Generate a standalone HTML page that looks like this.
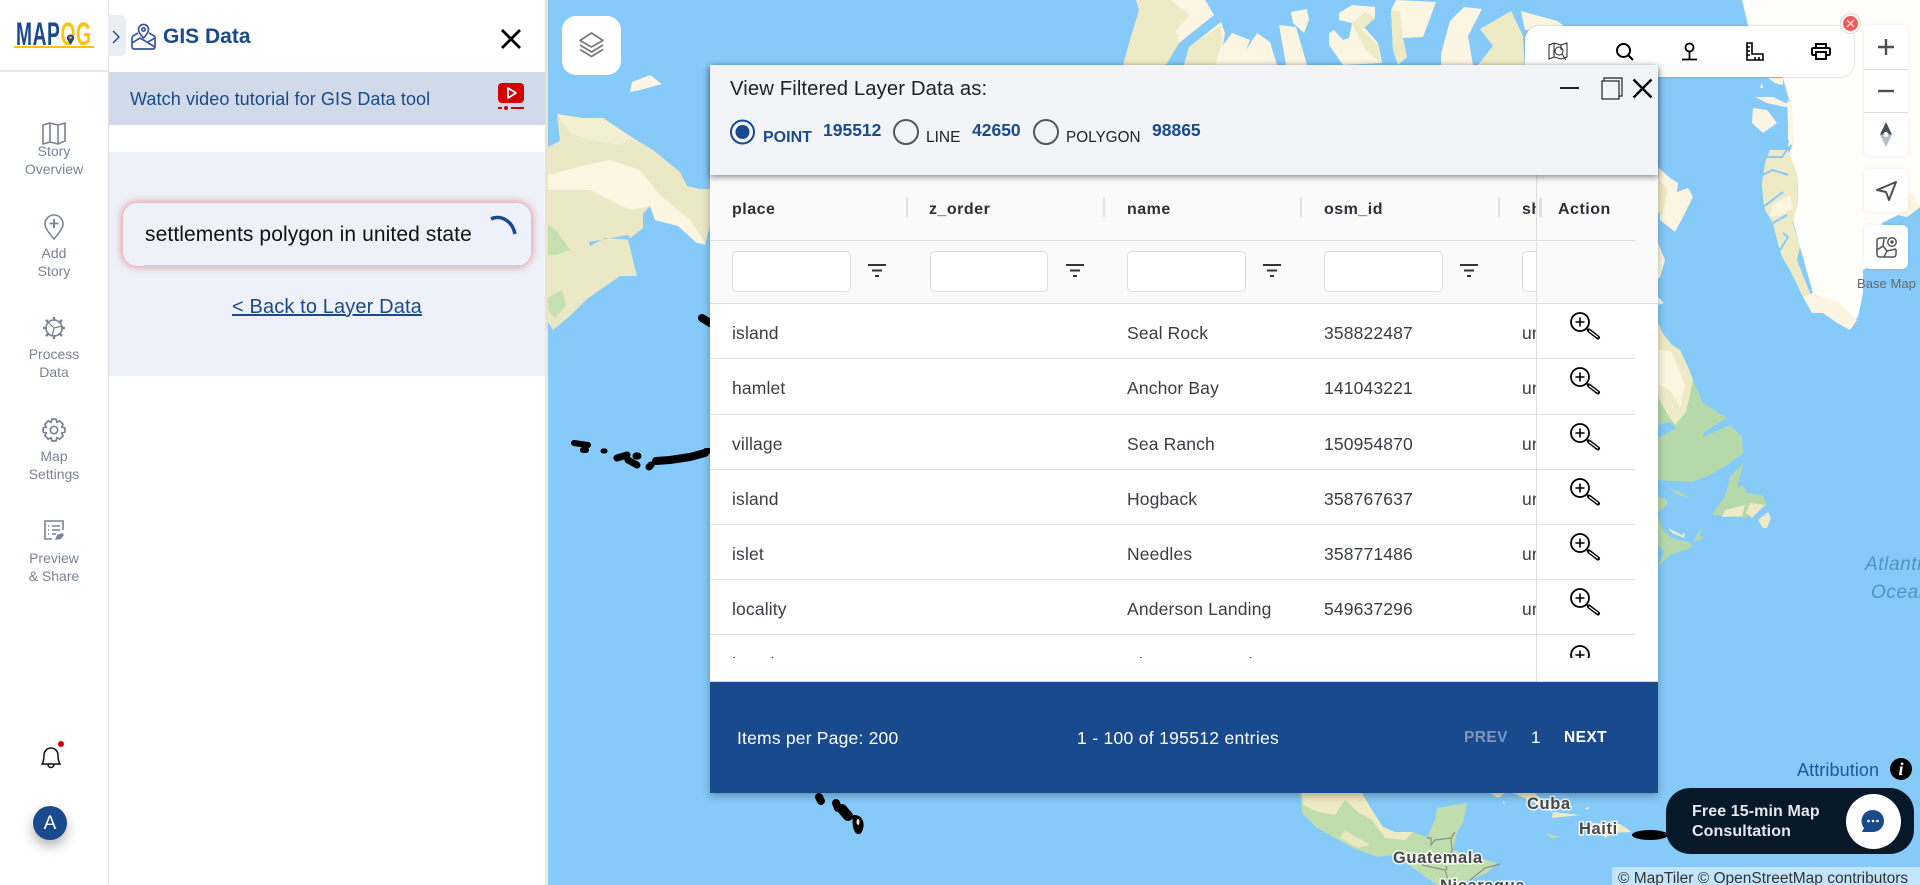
<!DOCTYPE html>
<html lang="en"><head><meta charset="utf-8"><title>GIS Data</title>
<style>
html,body{margin:0;padding:0;width:1920px;height:885px;overflow:hidden;background:#85caf9;font-family:"Liberation Sans",sans-serif}
.a{position:absolute;white-space:nowrap}
svg{display:block}
.nav{position:absolute;left:0;width:108px;text-align:center;color:#7a8296;font-size:14px;line-height:18px}
.th{position:absolute;top:200px;height:20px;line-height:20px;font-size:16px;font-weight:bold;color:#2b2f36;letter-spacing:.5px;white-space:nowrap}
.sep{position:absolute;top:198px;width:2px;height:19px;background:#e0e0e0}
.inp{position:absolute;top:251px;height:41px;background:#fff;border:1px solid #dcdcdc;border-radius:5px;box-sizing:border-box}
.td{position:absolute;font-size:17.5px;color:#3a3d42;letter-spacing:.15px;white-space:nowrap;line-height:20px}
.ln{position:absolute;left:0;width:925px;height:1px;background:#e2e2e2}
</style></head><body>

<!-- MAP -->
<svg class="a" style="left:0;top:0" width="1920" height="885" viewBox="0 0 1920 885">
<rect width="1920" height="885" fill="#85caf9"/>
<!-- Greenland -->
<path d="M1742 0L1920 0L1920 207L1907 217L1898 215L1882 223L1880 260L1863 270L1863 293L1858 317L1850 323L1837 307L1823 310L1813 293L1800 247L1793 220L1798 203L1797 173L1788 157L1793 143L1790 103L1783 78L1748 25Z" fill="#fffefb"/>
<path d="M1920 207L1912 192L1903 197L1898 215L1907 217Z" fill="#fbf5e1"/>
<path d="M1755 97L1773 97L1790 105L1785 107L1767 103ZM1753 108L1767 110L1777 123L1763 133L1752 123ZM1762 82L1763 88L1760 88ZM1768 78L1783 78L1783 85L1775 83ZM1787 100L1792 105L1794 143L1788 147L1788 125Z" fill="#fbf5e1"/>
<path d="M1770 150L1788 150L1797 173L1797 190L1798 203L1793 223L1800 247L1797 260L1810 293L1813 307L1803 297L1790 270L1782 257L1777 240L1773 223L1765 210L1763 200L1762 183L1765 163L1767 157Z" fill="#efeac6"/>
<path d="M1772 205L1790 195L1793 208L1780 216L1770 216Z" fill="#fbf5e1"/>
<path d="M1813 293L1840 303L1857 320L1850 330L1837 323L1823 313L1812 313L1803 297Z" fill="#fbf5e1"/>
<g fill="none" stroke="#85caf9" stroke-width="2"><path d="M1767 157L1782 157L1787 150M1762 175L1773 170L1788 175M1763 207L1783 192M1773 223L1787 215M1783 233L1788 237L1780 250M1785 120L1783 130M1788 140L1787 147"/></g>
<!-- top arctic islands -->
<path d="M1136 0L1205 0L1214 15L1195 30L1179 43L1166 65L1123 65L1132 33L1139 10Z" fill="#efeac6"/>
<path d="M1170 0L1205 0L1214 15L1195 30L1179 43L1176 30L1190 15Z" fill="#fbf5e1"/>
<path d="M1221 22L1225 33L1223 45L1232 33L1250 40L1246 50L1257 33L1270 42L1277 65L1184 65L1189 47Z" fill="#fbf5e1"/>
<path d="M1221 25L1222 42L1215 65L1184 65L1189 47Z" fill="#efeac6"/>
<path d="M1279 25L1296 27L1307 65L1286 65ZM1291 12L1307 9L1309 20L1304 33L1293 23Z" fill="#fbf5e1"/>
<path d="M1329 33L1334 30L1343 40L1349 38L1352 23L1339 20L1339 13L1352 5L1375 7L1375 18L1364 27L1378 43L1382 63L1343 65L1329 45Z" fill="#fbf5e1"/>
<path d="M1352 23L1365 12L1375 18L1362 30L1378 45L1380 62L1366 50Z" fill="#efeac6"/>
<path d="M1391 10L1396 0L1436 2L1423 37L1403 38L1407 57L1398 65L1393 50Z" fill="#fbf5e1"/>
<path d="M1391 10L1400 12L1403 38L1407 57L1398 65L1393 50Z" fill="#efeac6"/>
<path d="M1464 7L1482 9L1468 36L1473 65L1441 65L1441 54L1450 21Z" fill="#fbf5e1"/>
<path d="M1480 29L1511 11L1523 36L1525 65L1478 65L1493 46Z" fill="#efeac6"/>
<path d="M1521 11L1557 21L1570 30L1525 30Z" fill="#fbf5e1"/>
<!-- right of modal -->
<path d="M1658 167L1670 178L1678 183L1677 192L1688 188L1693 197L1683 217L1675 232L1660 220Z" fill="#fbf5e1"/>
<path d="M1658 178L1668 190L1662 215L1658 212Z" fill="#efeac6"/>
<path d="M1658 243L1665 260L1660 278L1658 278ZM1658 297L1664 303L1658 305Z" fill="#fbf5e1"/>
<!-- Labrador / Quebec -->
<path d="M1658 323L1664 335L1672 345L1680 350L1688 367L1693 380L1703 403L1727 418L1704 432L1703 437L1730 425L1742 437L1743 453L1727 465L1710 475L1692 482L1658 480Z" fill="#b6d9ab"/>
<path d="M1658 323L1664 335L1672 345L1680 350L1688 367L1693 380L1686 412L1675 425L1668 415L1658 397Z" fill="#efeac6"/>
<path d="M1658 350L1672 352L1685 385L1680 408L1670 390L1658 385Z" fill="#fbf5e1"/>
<path d="M1658 425L1670 422L1676 428L1658 438Z" fill="#85caf9"/>
<!-- Newfoundland etc -->
<path d="M1742 464L1730 477L1725 497L1717 507L1712 515L1740 517L1745 518L1763 507L1767 505L1762 495L1747 493L1743 485L1737 487L1743 465Z" fill="#b6d9ab"/>
<path d="M1725 510L1745 505L1742 516L1722 517ZM1750 503L1765 505L1752 518L1746 513ZM1768 512L1771 518L1767 528L1763 528L1758 520Z" fill="#efeac6"/>
<path d="M1668 487L1690 497L1680 496Z" fill="#b6d9ab"/>
<path d="M1658 496L1667 500L1667 505L1658 512Z" fill="#b6d9ab"/>
<path d="M1702 527L1693 542L1705 538L1700 536Z" fill="#b6d9ab"/>
<path d="M1658 515L1663 530L1672 538L1690 543L1693 547L1670 555L1658 567L1664 552L1658 545Z" fill="#b6d9ab"/>
<path d="M1668 528L1682 535L1685 532L1684 538L1672 533Z" fill="#efeac6"/>
<!-- Siberia/Alaska -->
<path d="M557 114L583 118L603 118L633 138L653 150L680 172L687 186L700 189L710 189L710 226L705 245L697 243L678 226L655 220L650 206L643 214L643 228L628 240L637 276L620 276L587 299L570 316L553 330L548 322L548 147L560 141Z" fill="#ebe8c5"/>
<path d="M548 175L585 165L610 160L640 170L660 195L690 220L705 243L697 243L678 226L655 220L650 206L630 210L590 190L548 190Z" fill="#fbf5e1"/>
<path d="M557 114L583 118L603 118L633 138L620 145L590 140L570 133Z" fill="#fbf5e1" opacity=".5"/>
<path d="M548 225L556 230L570 250L555 255L548 255ZM548 298L562 290L566 305L555 318L548 310Z" fill="#c6dfae"/>
<path d="M630 92L632 82L650 75L662 84L640 90Z" fill="#fbf5e1"/>
<path d="M589 242L628 235L632 240L605 238L590 246Z" fill="#85caf9"/>
<!-- Aleutians etc -->
<g fill="none" stroke="#000" stroke-linecap="round" stroke-linejoin="round"><path d="M574 443L588 445" stroke-width="6"/><path d="M583 450L586 450" stroke-width="6"/><path d="M603 451L605 451" stroke-width="5"/><path d="M617 458L627 455M628 460L637 465" stroke-width="7"/><path d="M636 456L638 456" stroke-width="7"/><path d="M649 467L651 465" stroke-width="7"/><path d="M656 461L670 460L690 457L705 453" stroke-width="8"/><path d="M706 451L709 451" stroke-width="6"/><path d="M702 318L710 323" stroke-width="8"/><path d="M819 797L821 801" stroke-width="8"/><path d="M836 803L838 808" stroke-width="8"/><path d="M842 809L848 816" stroke-width="10"/></g>
<path d="M853 815C864 814 866 826 861 833C855 838 851 826 853 815Z" fill="#000"/><ellipse cx="858" cy="822" rx="1.5" ry="3" fill="#efeac6"/>
<!-- Mexico / C.America -->
<path d="M1300 790L1360 790L1372 810L1383 827L1395 832L1413 832L1427 837L1435 820L1437 808L1467 803L1463 823L1457 832L1453 850L1477 857L1497 863L1487 873L1470 880L1457 885L1437 885L1413 868L1393 855L1377 857L1353 848L1317 828L1302 813Z" fill="#c0ddae"/>
<path d="M1302 793L1360 790L1372 810L1383 827L1395 832L1413 832L1405 840L1385 838L1372 820L1358 812L1345 800L1335 815L1318 812L1303 805Z" fill="#f1ebc5"/>
<path d="M1345 830L1370 845L1358 848L1340 838Z" fill="#e6e8bd"/>
<g fill="none" stroke="#8d9080" stroke-width="1.2"><path d="M1427 838L1431 838L1431 845L1435 840L1451 838L1452 850L1450 855M1455 832L1451 838M1422 865L1445 870L1448 880L1460 885M1447 870L1446 866M1470 880L1485 868L1500 864"/></g>
<path d="M1490 793L1505 793L1498 798ZM1513 793L1535 793L1553 812L1580 815L1552 818L1553 812L1540 805ZM1503 800L1505 803L1503 804ZM1585 808L1590 807L1587 810Z" fill="#f1ebc5"/>
<path d="M1590 823L1620 824L1632 832L1613 833L1605 838L1600 830Z" fill="#efeac6"/>
<path d="M1545 833L1560 837L1552 838Z" fill="#c0ddae"/>
<g fill="#000"><ellipse cx="1650" cy="835" rx="18" ry="5"/></g>
<g style="font-family:'Liberation Sans',sans-serif;paint-order:stroke" fill="#484848" stroke="#fff" stroke-opacity=".85" stroke-width="3" font-size="16.5" font-weight="bold" letter-spacing=".6">
<text x="1393" y="863">Guatemala</text><text x="1440" y="891">Nicaragua</text><text x="1527" y="809">Cuba</text><text x="1579" y="834">Haiti</text></g>
<g style="font-family:'Liberation Sans',sans-serif" fill="#4a95c4" font-style="italic" font-size="19" letter-spacing=".6"><text x="1865" y="570">Atlantic</text><text x="1871" y="598">Ocean</text></g>
<rect x="545" y="0" width="3" height="885" fill="#eaeae2"/>
<rect x="545" y="0" width="3" height="330" fill="#efe4c8"/>
</svg>

<!-- left rail -->
<div class="a" style="left:0;top:0;width:109px;height:885px;background:#fff;border-right:1px solid #e0e0e0;box-sizing:border-box"></div>
<div class="a" style="left:0;top:70px;width:108px;height:2px;background:#e6e6e6"></div>
<!-- logo -->
<div class="a" style="left:16px;top:20px;height:28px;line-height:28px;font-size:32px;font-weight:bold;color:#194a8d;transform-origin:0 0;transform:scaleX(.6);letter-spacing:1px">MAP<span style="color:#fbc20f">OG</span></div>
<div class="a" style="left:14px;top:46px;width:80px;height:2px;background:#fbc20f"></div>
<svg class="a" style="left:66px;top:33px" width="9" height="13" viewBox="0 0 9 13"><path d="M4.500 12L1 6a3.600 3.600 0 1 1 7 0Z" fill="#194a8d"/><circle cx="4.500" cy="4.500" r="1.300" fill="#fbc20f"/></svg>

<!-- nav icons -->
<svg class="a" style="left:42px;top:121px" width="24" height="24" viewBox="0 0 24 24" fill="none" stroke="#7a8296" stroke-width="1.600" stroke-linejoin="round"><path d="M1 4L8 2L16 4L23 2V20L16 23L8 21L1 23ZM8 2V21M16 4V23"/></svg>
<div class="nav" style="top:142px">Story<br>Overview</div>
<svg class="a" style="left:43px;top:213px" width="22" height="28" viewBox="0 0 22 28" fill="none" stroke="#7a8296" stroke-width="1.600"><path d="M11 26C6 20 2 15 2 11a9 9 0 0 1 18 0C20 15 16 20 11 26Z"/><path d="M11 6V15M6.500 10.500H15.500" stroke-width="1.800"/></svg>
<div class="nav" style="top:244px">Add<br>Story</div>
<svg class="a" style="left:42px;top:316px" width="24" height="24" viewBox="0 0 24 24" fill="none" stroke="#7a8296"><circle cx="12" cy="12" r="8" stroke-width="1.600"/><path d="M12 1V5M12 19V23M1 12H5M19 12H23M4 4L7 7M17 17L20 20M20 4L17 7M7 17L4 20" stroke-width="2.400"/><path d="M7 7L12 12L10 20M12 12L20 10" stroke-width="1.200"/></svg>
<div class="nav" style="top:345px">Process<br>Data</div>
<svg class="a" style="left:41px;top:417px" width="26" height="26" viewBox="0 0 24 24" fill="none" stroke="#7a8296" stroke-width="1.600" stroke-linejoin="round"><circle cx="12" cy="12" r="3.400"/><path d="M10 2H14L14.600 5L17.300 3.600L20.400 6.700L19 9.400L22 10V14L19 14.600L20.400 17.300L17.300 20.400L14.600 19L14 22H10L9.400 19L6.700 20.400L3.600 17.300L5 14.600L2 14V10L5 9.400L3.600 6.700L6.700 3.600L9.400 5Z"/></svg>
<div class="nav" style="top:447px">Map<br>Settings</div>
<svg class="a" style="left:43px;top:519px" width="22" height="23" viewBox="0 0 22 23" fill="none" stroke="#7a8296" stroke-width="1.600"><path d="M9 20H2V2H20V11"/><path d="M5 7H6M9 7H17M5 11H6M9 11H17M5 15H6M9 15H13"/><path d="M12 21L14 16L19 14L21 16L18 20Z" fill="#7a8296" stroke="none"/></svg>
<div class="nav" style="top:549px">Preview<br>&amp; Share</div>

<svg class="a" style="left:40px;top:745px" width="22" height="24" viewBox="0 0 22 24" fill="none" stroke="#111" stroke-width="1.500"><path d="M2 19C4 16 4 13 4 10a7 7 0 0 1 14 0C18 13 18 16 20 19Z"/><path d="M8 19.500a3 3 0 0 0 6 0"/></svg>
<div class="a" style="left:58px;top:741px;width:6px;height:6px;background:#d40000;border-radius:50%"></div>
<div class="a" style="left:33px;top:806px;width:34px;height:34px;background:#194a8d;border-radius:50%;color:#fff;text-align:center;line-height:35px;font-size:19px;box-shadow:0 6px 12px rgba(0,0,0,.3)">A</div>

<!-- panel -->
<div class="a" style="left:109px;top:0;width:436px;height:885px;background:#fff"></div>
<div class="a" style="left:108px;top:15px;width:18px;height:41px;background:#e9eef5;border-radius:0 6px 6px 0"></div>
<svg class="a" style="left:111px;top:29px" width="10" height="16" viewBox="0 0 10 16" fill="none" stroke="#194a8d" stroke-width="1.400"><path d="M2 2L8 8L2 14"/></svg>
<svg class="a" style="left:131px;top:23px" width="25" height="27" viewBox="0 0 25 27" fill="none" stroke="#3a55a5" stroke-width="1.700" stroke-linejoin="round"><path d="M12.500 15C9 11 7.500 9 7.500 6.500a5 5 0 0 1 10 0C17.500 9 16 11 12.500 15Z"/><circle cx="12.500" cy="6.500" r="1.700"/><path d="M7 10L2 13C1 14 1 15 1 16V24C1 25 2 26 3 26H22C23 26 24 25 24 24V15C24 14 24 13 23 13L18 10M1 20L9 15L24 24M17 19L24 15"/></svg>
<div class="a" style="left:163px;top:24px;height:25px;line-height:25px;font-size:21px;font-weight:bold;color:#194a8d">GIS Data</div>
<svg class="a" style="left:500px;top:28px" width="22" height="22" viewBox="0 0 22 22" stroke="#000" stroke-width="2.800"><path d="M2 2L20 20M20 2L2 20"/></svg>
<div class="a" style="left:109px;top:72px;width:436px;height:53px;background:#d1dae8"></div>
<div class="a" style="left:130px;top:88px;height:22px;line-height:22px;font-size:18px;color:#194a8d;letter-spacing:.1px">Watch video tutorial for GIS Data tool</div>
<svg class="a" style="left:497px;top:82px" width="28" height="29" viewBox="0 0 28 29"><rect x="1" y="1" width="26" height="20" rx="4" fill="#d40000"/><path d="M11 6L19 11L11 16Z" fill="none" stroke="#fff" stroke-width="1.800" stroke-linejoin="round"/><rect x="1" y="25" width="4" height="2" fill="#d40000"/><circle cx="9" cy="26" r="2" fill="#d40000"/><rect x="14" y="25" width="13" height="2" fill="#d40000"/></svg>
<div class="a" style="left:109px;top:152px;width:436px;height:224px;background:#eef1f9"></div>
<div class="a" style="left:123px;top:203px;width:408px;height:63px;background:#eef1f9;border-radius:14px;box-shadow:0 0 8px 1px rgba(215,70,60,.55)"></div>
<div class="a" style="left:144px;top:265px;width:380px;height:2px;background:#cfd2da"></div>
<div class="a" style="left:145px;top:221px;height:28px;line-height:28px;font-size:21px;color:#111;letter-spacing:.1px">settlements polygon in united state</div>
<svg class="a" style="left:488px;top:214px" width="30" height="22" viewBox="0 0 30 22" fill="none" stroke="#194a8d" stroke-width="3.500"><path d="M3 5C11 1 24 5 27 20"/></svg>
<div class="a" style="left:232px;top:293px;height:28px;line-height:28px;font-size:20px;color:#194a8d;text-decoration:underline;letter-spacing:.13px">&lt; Back to Layer Data</div>

<!-- layers button -->
<div class="a" style="left:562px;top:16px;width:59px;height:59px;background:#fff;border-radius:14px"></div>
<svg class="a" style="left:578px;top:31px" width="27" height="29" viewBox="0 0 27 29" fill="none" stroke="#777" stroke-width="1.700" stroke-linejoin="round"><path d="M13.500 2L25 9.500L13.500 16L2 9.500Z"/><path d="M2 14L13.500 21L25 14M2 18.500L13.500 25.500L25 18.500"/></svg>

<!-- toolbar -->
<div class="a" style="left:1525px;top:26px;width:329px;height:51px;background:#fff;border-radius:14px;box-shadow:0 0 2px rgba(0,0,0,.25)"></div>
<svg class="a" style="left:1548px;top:42px" width="20" height="19" viewBox="0 0 20 19" fill="none" stroke="#222" stroke-width="1"><path d="M1 3L6 1L13 3L19 1V15L13 17L6 15L1 17ZM6 1V15M13 3V8"/><circle cx="11" cy="9" r="4"/><path d="M14 12L18 18"/></svg>
<svg class="a" style="left:1615px;top:42px" width="20" height="19" viewBox="0 0 20 19" fill="none" stroke="#000" stroke-width="2"><circle cx="8.500" cy="8.500" r="6.500"/><path d="M13 13L18 18"/></svg>
<svg class="a" style="left:1681px;top:42px" width="17" height="19" viewBox="0 0 17 19" fill="none" stroke="#000" stroke-width="1.800"><circle cx="8.500" cy="5.500" r="4"/><path d="M8.500 10V17M1 17.500H16"/></svg>
<svg class="a" style="left:1746px;top:42px" width="18" height="19" viewBox="0 0 18 19" fill="none" stroke="#000" stroke-width="1.600"><path d="M1 1H6V12H17V18H1ZM1 5H4M1 9H4M1 13H4M9 18V15M13 18V15"/></svg>
<svg class="a" style="left:1811px;top:43px" width="20" height="17" viewBox="0 0 20 17" fill="none" stroke="#000" stroke-width="2"><path d="M5 5V1H15V5M5 12H2C1 12 1 11 1 10V6C1 5 2 5 3 5H17C18 5 19 5 19 6V10C19 11 19 12 18 12H15M5 9H15V16H5Z"/></svg>
<div class="a" style="left:1840px;top:13px;width:21px;height:21px;background:#f25a5a;border:1px solid #ddd;outline:2px solid #fff;outline-offset:-3px;border-radius:50%;box-sizing:border-box"></div>
<svg class="a" style="left:1846px;top:19px" width="9" height="9" viewBox="0 0 9 9" stroke="#fff" stroke-width="1.200"><path d="M1 1L8 8M8 1L1 8"/></svg>

<!-- zoom controls -->
<div class="a" style="left:1864px;top:25px;width:44px;height:131px;background:#fff;border-radius:5px;box-shadow:0 0 5px rgba(0,0,0,.08)"></div>
<div class="a" style="left:1864px;top:69px;width:44px;height:1px;background:#ddd"></div>
<div class="a" style="left:1864px;top:112px;width:44px;height:1px;background:#ddd"></div>
<svg class="a" style="left:1876px;top:37px" width="20" height="20" viewBox="0 0 20 20" stroke="#4a4f57" stroke-width="2.400"><path d="M10 2V18M2 10H18"/></svg>
<svg class="a" style="left:1876px;top:81px" width="20" height="20" viewBox="0 0 20 20" stroke="#4a4f57" stroke-width="2.400"><path d="M2 10H18"/></svg>
<svg class="a" style="left:1879px;top:121px" width="14" height="27" viewBox="0 0 14 27"><path d="M7 1L13 13.500H1Z" fill="#4a4f57"/><path d="M1 13.500H13L7 26Z" fill="#b5bbc9"/><circle cx="7" cy="13.500" r="2.500" fill="#fff"/></svg>
<div class="a" style="left:1864px;top:169px;width:44px;height:43px;background:#fff;border-radius:5px;box-shadow:0 0 5px rgba(0,0,0,.08)"></div>
<svg class="a" style="left:1875px;top:180px" width="23" height="22" viewBox="0 0 23 22" fill="none" stroke="#4a4f57" stroke-width="2" stroke-linejoin="round"><path d="M21 2L2 10L11 12L14 20Z"/></svg>
<div class="a" style="left:1864px;top:225px;width:44px;height:44px;background:#fff;border-radius:6px;box-shadow:0 0 5px rgba(0,0,0,.08)"></div>
<svg class="a" style="left:1875px;top:236px" width="22" height="22" viewBox="0 0 22 22" fill="none" stroke="#555" stroke-width="1.500"><path d="M12 2H5C3 2 2 3 2 5V18C2 20 3 21 5 21H18C20 21 21 20 21 18V13M2 14L8 10L12 15L9 21M8 10L9 3M12 15L21 13"/><circle cx="17" cy="6" r="4.200"/><circle cx="17" cy="6" r="1" fill="#555"/></svg>
<div class="a" style="left:1857px;top:276px;width:58px;text-align:center;font-size:13px;line-height:16px;color:#666;letter-spacing:.05px">Base Map</div>

<!-- modal -->
<div class="a" style="left:710px;top:65px;width:948px;height:728px;background:#fff;box-shadow:0 3px 8px rgba(0,0,0,.3)"></div>
<div class="a" style="left:710px;top:175px;width:948px;height:128px;background:#fafafa"></div>
<div class="th" style="left:732px">place</div><div class="sep" style="left:906px"></div>
<div class="th" style="left:929px">z_order</div><div class="sep" style="left:1103px"></div>
<div class="th" style="left:1127px">name</div><div class="sep" style="left:1300px"></div>
<div class="th" style="left:1324px">osm_id</div><div class="sep" style="left:1498px"></div>
<div class="a" style="left:710px;top:240px;width:925px;height:1px;background:#e0e0e0"></div>
<div class="inp" style="left:732px;width:119px"></div><div class="inp" style="left:930px;width:118px"></div><div class="inp" style="left:1127px;width:119px"></div><div class="inp" style="left:1324px;width:119px"></div><div class="inp" style="left:1522px;width:14px;border-right:0;border-radius:5px 0 0 5px"></div>
<svg class="a" style="left:868px;top:263px" width="18" height="15" viewBox="0 0 18 15" stroke="#333" stroke-width="2"><path d="M0 2H18M4 7.500H14M7 13H11"/></svg>
<svg class="a" style="left:1066px;top:263px" width="18" height="15" viewBox="0 0 18 15" stroke="#333" stroke-width="2"><path d="M0 2H18M4 7.500H14M7 13H11"/></svg>
<svg class="a" style="left:1263px;top:263px" width="18" height="15" viewBox="0 0 18 15" stroke="#333" stroke-width="2"><path d="M0 2H18M4 7.500H14M7 13H11"/></svg>
<svg class="a" style="left:1460px;top:263px" width="18" height="15" viewBox="0 0 18 15" stroke="#333" stroke-width="2"><path d="M0 2H18M4 7.500H14M7 13H11"/></svg>
<div class="a" style="left:710px;top:303px;width:948px;height:1px;background:#e0e0e0"></div>
<div class="ln" style="left:710px;top:358px"></div><div class="ln" style="left:710px;top:414px"></div><div class="ln" style="left:710px;top:469px"></div><div class="ln" style="left:710px;top:524px"></div><div class="ln" style="left:710px;top:579px"></div><div class="ln" style="left:710px;top:634px"></div>

<div class="td" style="left:732px;top:323px">island</div><div class="td" style="left:1127px;top:323px">Seal Rock</div><div class="td" style="left:1324px;top:323px">358822487</div>
<div class="td" style="left:732px;top:378px">hamlet</div><div class="td" style="left:1127px;top:378px">Anchor Bay</div><div class="td" style="left:1324px;top:378px">141043221</div>
<div class="td" style="left:732px;top:434px">village</div><div class="td" style="left:1127px;top:434px">Sea Ranch</div><div class="td" style="left:1324px;top:434px">150954870</div>
<div class="td" style="left:732px;top:489px">island</div><div class="td" style="left:1127px;top:489px">Hogback</div><div class="td" style="left:1324px;top:489px">358767637</div>
<div class="td" style="left:732px;top:544px">islet</div><div class="td" style="left:1127px;top:544px">Needles</div><div class="td" style="left:1324px;top:544px">358771486</div>
<div class="td" style="left:732px;top:599px">locality</div><div class="td" style="left:1127px;top:599px">Anderson Landing</div><div class="td" style="left:1324px;top:599px">549637296</div>
<div class="a" style="left:710px;top:640px;width:948px;height:18px;overflow:hidden"><div class="td" style="left:22px;top:14px">beach</div><div class="td" style="left:417px;top:14px">Sharp Hen Rock</div><div class="td" style="left:614px;top:14px">150078756</div></div>

<div class="a" style="left:1522px;top:176px;width:14px;height:482px;overflow:hidden">
<div class="th" style="left:0;top:24px">sh</div>
<div class="td" style="left:0;top:147px">un</div><div class="td" style="left:0;top:202px">un</div><div class="td" style="left:0;top:258px">un</div><div class="td" style="left:0;top:313px">un</div><div class="td" style="left:0;top:368px">un</div><div class="td" style="left:0;top:423px">un</div>
</div>
<div class="a" style="left:1536px;top:175px;width:1px;height:506px;background:#dcdcdc"></div>
<div class="a" style="left:1537px;top:304px;width:121px;height:377px;background:#fff"></div>
<div class="ln" style="left:1537px;top:358px;width:98px"></div><div class="ln" style="left:1537px;top:414px;width:98px"></div><div class="ln" style="left:1537px;top:469px;width:98px"></div><div class="ln" style="left:1537px;top:524px;width:98px"></div><div class="ln" style="left:1537px;top:579px;width:98px"></div><div class="ln" style="left:1537px;top:634px;width:98px"></div>
<div class="sep" style="left:1539px;width:3px"></div>
<div class="th" style="left:1558px;font-weight:bold">Action</div>

<svg width="0" height="0" style="position:absolute"><defs><g id="zi" fill="none" stroke="#000"><circle cx="11" cy="11" r="9" stroke-width="1.800"/><path d="M11 6.500V15.500M6.500 11H15.500" stroke-width="1.600"/><path d="M17.500 17.500L20 19.500" stroke-width="1.500"/><path d="M20 19.500L29 26.500" stroke-width="4" stroke-linecap="round"/><path d="M20.500 20L28.500 26" stroke="#fff" stroke-width="1.300" stroke-linecap="round"/></g></defs></svg>
<svg class="a" style="left:1569px;top:311px" width="33" height="31"><use href="#zi"/></svg>
<svg class="a" style="left:1569px;top:366px" width="33" height="31"><use href="#zi"/></svg>
<svg class="a" style="left:1569px;top:422px" width="33" height="31"><use href="#zi"/></svg>
<svg class="a" style="left:1569px;top:477px" width="33" height="31"><use href="#zi"/></svg>
<svg class="a" style="left:1569px;top:532px" width="33" height="31"><use href="#zi"/></svg>
<svg class="a" style="left:1569px;top:587px" width="33" height="31"><use href="#zi"/></svg>
<div class="a" style="left:1569px;top:640px;width:33px;height:18px;overflow:hidden"><svg style="position:absolute;left:0;top:4px" width="33" height="31"><use href="#zi"/></svg></div>

<!-- modal header -->
<div class="a" style="left:710px;top:65px;width:948px;height:110px;background:#f3f4f8;box-shadow:0 2px 6px rgba(0,0,0,.45)"></div>
<div class="a" style="left:730px;top:77px;height:24px;line-height:24px;font-size:20.300px;color:#222;letter-spacing:.1px">View Filtered Layer Data as:</div>
<svg class="a" style="left:729px;top:118px" width="27" height="28" viewBox="0 0 27 28" fill="none"><circle cx="13.500" cy="14" r="11.500" stroke="#194a8d" stroke-width="2"/><circle cx="13.500" cy="14" r="7" fill="#194a8d"/></svg>
<div class="a" style="left:763px;top:128px;height:20px;line-height:20px;font-size:16px;font-weight:bold;color:#194a8d">POINT</div>
<div class="a" style="left:823px;top:120px;height:20px;line-height:20px;font-size:17.500px;font-weight:bold;color:#194a8d">195512</div>
<svg class="a" style="left:892px;top:118px" width="28" height="28" viewBox="0 0 28 28" fill="none"><circle cx="14" cy="14" r="12" stroke="#555" stroke-width="2"/></svg>
<div class="a" style="left:926px;top:128px;height:20px;line-height:20px;font-size:15.500px;color:#222">LINE</div>
<div class="a" style="left:972px;top:120px;height:20px;line-height:20px;font-size:17.500px;font-weight:bold;color:#194a8d">42650</div>
<svg class="a" style="left:1032px;top:118px" width="28" height="28" viewBox="0 0 28 28" fill="none"><circle cx="14" cy="14" r="12" stroke="#555" stroke-width="2"/></svg>
<div class="a" style="left:1066px;top:128px;height:20px;line-height:20px;font-size:15.300px;color:#222">POLYGON</div>
<div class="a" style="left:1152px;top:120px;height:20px;line-height:20px;font-size:17.500px;font-weight:bold;color:#194a8d">98865</div>
<div class="a" style="left:1560px;top:87px;width:19px;height:2px;background:#222"></div>
<svg class="a" style="left:1600px;top:77px" width="23" height="23" viewBox="0 0 23 23" fill="none" stroke="#222" stroke-width="1.200"><rect x="2" y="4" width="17" height="18"/><path d="M4 4V1H22V19H19"/></svg>
<svg class="a" style="left:1632px;top:78px" width="21" height="21" viewBox="0 0 21 21" stroke="#000" stroke-width="2.400"><path d="M1.500 1.500L19.500 19.500M19.500 1.500L1.500 19.500"/></svg>

<!-- footer -->
<div class="a" style="left:710px;top:681px;width:948px;height:112px;background:#194a8d;border-top:1px solid #d8d8d8;box-sizing:border-box"></div>
<div class="a" style="left:737px;top:728px;height:20px;line-height:20px;font-size:17.500px;color:#fff;letter-spacing:.2px">Items per Page: 200</div>
<div class="a" style="left:1077px;top:728px;height:20px;line-height:20px;font-size:17.500px;color:#fff;letter-spacing:.3px">1 - 100 of 195512 entries</div>
<div class="a" style="left:1464px;top:728px;height:20px;line-height:20px;font-size:15.500px;font-weight:bold;color:#7d97bf;letter-spacing:.4px">PREV</div>
<div class="a" style="left:1531px;top:728px;height:20px;line-height:20px;font-size:17px;color:#fff">1</div>
<div class="a" style="left:1564px;top:728px;height:20px;line-height:20px;font-size:15.500px;font-weight:bold;color:#fff;letter-spacing:.4px">NEXT</div>

<!-- attribution -->
<div class="a" style="left:1797px;top:759px;height:22px;line-height:22px;font-size:18px;color:#1f56a0;letter-spacing:.1px">Attribution</div>
<div class="a" style="left:1890px;top:758px;width:22px;height:22px;background:#000;border-radius:50%;color:#fff;text-align:center;font:italic bold 18px/22px 'Liberation Serif',serif">i</div>
<!-- chat -->
<div class="a" style="left:1666px;top:788px;width:248px;height:66px;background:#071828;border-radius:24px"></div>
<div class="a" style="left:1692px;top:802px;font-size:16px;line-height:20px;font-weight:bold;color:#e6e8ec;letter-spacing:.1px">Free 15-min Map<br>Consultation</div>
<div class="a" style="left:1846px;top:794px;width:55px;height:55px;background:#fff;border-radius:50%"></div>
<svg class="a" style="left:1861px;top:809px" width="24" height="24" viewBox="0 0 24 24"><path d="M12 1A11 11 0 0 1 12 23H1L3 19A11 11 0 0 1 12 1Z" fill="#194a8d"/><circle cx="7.500" cy="12" r="1.300" fill="#fff"/><circle cx="12" cy="12" r="1.300" fill="#fff"/><circle cx="16.500" cy="12" r="1.300" fill="#fff"/></svg>
<!-- copyright -->
<div class="a" style="left:1612px;top:867px;width:308px;height:18px;background:rgba(255,255,255,.5);overflow:hidden"><div class="a" style="left:6px;top:3px;font-size:15.500px;line-height:18px;color:#333">© MapTiler © OpenStreetMap contributors</div></div>
</body></html>
